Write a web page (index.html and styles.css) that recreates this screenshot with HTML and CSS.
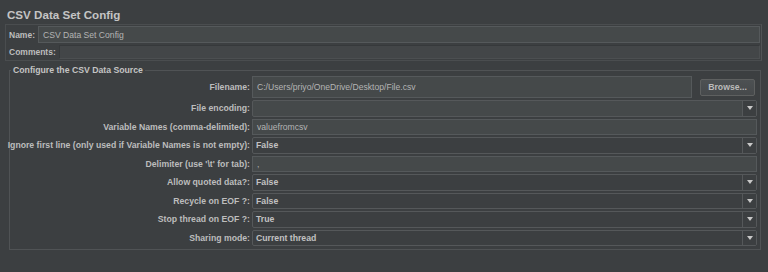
FILE: index.html
```html
<!DOCTYPE html>
<html>
<head>
<meta charset="utf-8">
<link rel="stylesheet" href="styles.css">
</head>
<body>
<div class="title">CSV Data Set Config</div>
<div class="panel">
  <div class="prow">
    <span class="plabel">Name:</span>
    <div class="field name-field">CSV Data Set Config</div>
  </div>
  <div class="prow">
    <span class="plabel">Comments:</span>
    <div class="field comments-field"></div>
  </div>
</div>
<fieldset class="group">
  <legend class="legend">Configure the CSV Data Source</legend>
  <div class="grid">
    <div class="label">Filename:</div>
    <div class="file-cell">
      <div class="field file-field">C:/Users/priyo/OneDrive/Desktop/File.csv</div>
      <button class="browse">Browse...</button>
    </div>

    <div class="label">File encoding:</div>
    <div class="combo editable"><span class="cv"></span><span class="arrow"><i class="tri"></i></span></div>

    <div class="label">Variable Names (comma-delimited):</div>
    <div class="field text-row">valuefromcsv</div>

    <div class="label">Ignore first line (only used if Variable Names is not empty):</div>
    <div class="combo"><span class="cv">False</span><span class="arrow"><i class="tri"></i></span></div>

    <div class="label">Delimiter (use '\t' for tab):</div>
    <div class="field text-row">,</div>

    <div class="label">Allow quoted data?:</div>
    <div class="combo"><span class="cv">False</span><span class="arrow"><i class="tri"></i></span></div>

    <div class="label">Recycle on EOF ?:</div>
    <div class="combo"><span class="cv">False</span><span class="arrow"><i class="tri"></i></span></div>

    <div class="label">Stop thread on EOF ?:</div>
    <div class="combo"><span class="cv">True</span><span class="arrow"><i class="tri"></i></span></div>

    <div class="label">Sharing mode:</div>
    <div class="combo"><span class="cv">Current thread</span><span class="arrow"><i class="tri"></i></span></div>
  </div>
</fieldset>
</body>
</html>
```
FILE: styles.css
```css
html, body {
  margin: 0;
  padding: 0;
  background: #3c3f41;
  width: 768px;
  height: 272px;
  overflow: hidden;
  font-family: "Liberation Sans", Arial, sans-serif;
  color: #bbbbbb;
}

.title {
  padding: 8px 0 0 7px;
  height: 16px;
  font-size: 11.6px;
  line-height: 14px;
  font-weight: bold;
  color: #c4c4c4;
}

.panel {
  margin: 0 6px 0 5px;
  border: 1px solid #4a4d4f;
  border-right-color: #505355;
  padding: 1px 1px 1px 3px;
  display: flex;
  flex-direction: column;
  gap: 2px;
}

.prow {
  display: flex;
  align-items: center;
  gap: 3px;
}

.plabel {
  font-size: 8.5px;
  font-weight: bold;
  white-space: nowrap;
  color: #bdbdbd;
}

.field {
  box-sizing: border-box;
  background: #45494a;
  border: 1px solid #55595b;
  display: flex;
  align-items: center;
  font-size: 8.6px;
  color: #b4b4b4;
  white-space: nowrap;
  overflow: hidden;
}

.name-field {
  flex: 1;
  height: 17px;
  padding-left: 4px;
}

.comments-field {
  flex: 1;
  height: 14px;
  background: #434648;
  border-color: #36393b #4c4f51 #4c4f51 #36393b;
}

.group {
  margin: 4px 7px 0 9px;
  padding: 0 3px 3px 0;
  border: 1px solid #505355;
  min-width: 0;
}

.legend {
  margin-left: 1px;
  padding: 0 2px;
  font-size: 8.7px;
  line-height: 11px;
  font-weight: bold;
  color: #c4c4c4;
}

.grid {
  display: grid;
  grid-template-columns: 240px 1fr;
  column-gap: 2px;
  row-gap: 2px;
  grid-template-rows: 22px repeat(8, 16.5px);
}

.label {
  display: flex;
  justify-content: flex-end;
  align-items: center;
  white-space: nowrap;
  font-size: 8.7px;
  font-weight: bold;
  color: #bdbdbd;
}

.file-cell {
  display: flex;
  align-items: center;
  gap: 8px;
  padding-right: 2px;
}

.file-field {
  flex: 1;
  height: 22px;
  padding-left: 4px;
}

.browse {
  box-sizing: border-box;
  width: 55px;
  height: 17px;
  margin: 0;
  padding: 0;
  border: 1px solid #5e6060;
  border-radius: 2px;
  background: linear-gradient(#4d5153, #46494b);
  color: #bbbbbb;
  font-family: "Liberation Sans", Arial, sans-serif;
  font-size: 8.7px;
  font-weight: bold;
}

.text-row {
  height: 100%;
  padding-left: 4px;
}

.combo {
  box-sizing: border-box;
  height: 100%;
  display: flex;
  align-items: stretch;
  border: 1px solid #55585a;
  border-radius: 2px;
  background: #3c3f41;
}

.combo.editable {
  background: #45494a;
}

.cv {
  flex: 1;
  display: flex;
  align-items: center;
  padding-left: 3px;
  font-size: 8.7px;
  font-weight: bold;
  color: #c2c2c2;
  white-space: nowrap;
}

.arrow {
  width: 13px;
  border-left: 1px solid #55585a;
  display: flex;
  align-items: center;
  justify-content: center;
  background: #3c3f41;
}

.tri {
  width: 0;
  height: 0;
  border-left: 3px solid transparent;
  border-right: 3px solid transparent;
  border-top: 4px solid #c8c8c8;
}
```
